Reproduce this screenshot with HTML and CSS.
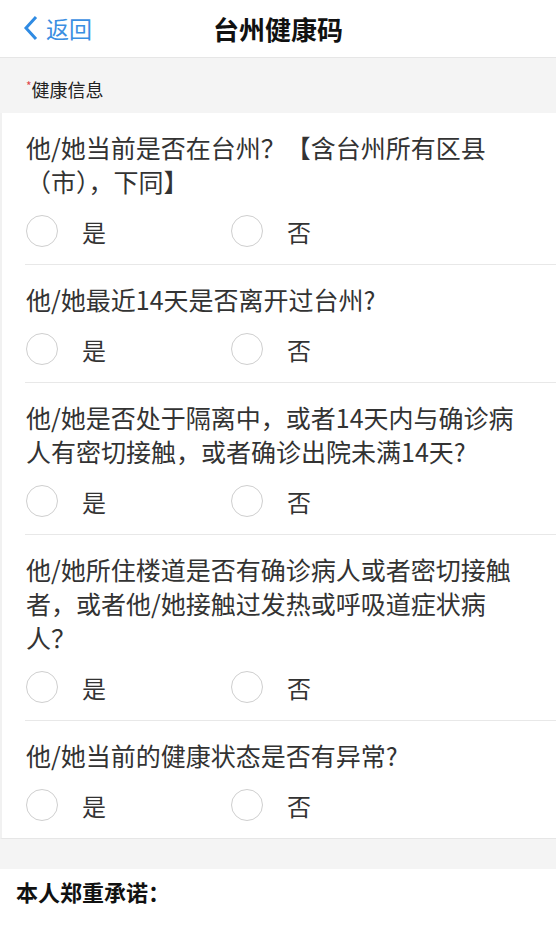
FILE: index.html
```html
<!DOCTYPE html>
<html>
<head>
  <meta charset="utf-8">
  <title>台州健康码</title>
  <link rel="stylesheet" href="styles.css">
</head>
<body>
  <div class="header">
    <a class="back">
      <svg width="16" height="26" viewBox="0 0 16 26"><polyline points="13,2 3,13 13,24" fill="none" stroke="#2f8be3" stroke-width="3" stroke-linejoin="miter"/></svg>
      <span>返回</span>
    </a>
    <h1>台州健康码</h1>
  </div>

  <div class="section-title"><span class="star">*</span>健康信息</div>

  <div class="form">
    <div class="question">
      <p>他/她当前是否在台州？【含台州所有区县（市），下同】</p>
      <div class="options">
        <label class="option"><span class="radio"></span>是</label>
        <label class="option"><span class="radio"></span>否</label>
      </div>
    </div>
    <div class="question">
      <p>他/她最近14天是否离开过台州?</p>
      <div class="options">
        <label class="option"><span class="radio"></span>是</label>
        <label class="option"><span class="radio"></span>否</label>
      </div>
    </div>
    <div class="question">
      <p>他/她是否处于隔离中，或者14天内与确诊病人有密切接触，或者确诊出院未满14天?</p>
      <div class="options">
        <label class="option"><span class="radio"></span>是</label>
        <label class="option"><span class="radio"></span>否</label>
      </div>
    </div>
    <div class="question">
      <p>他/她所住楼道是否有确诊病人或者密切接触者，或者他/她接触过发热或呼吸道症状病人？</p>
      <div class="options">
        <label class="option"><span class="radio"></span>是</label>
        <label class="option"><span class="radio"></span>否</label>
      </div>
    </div>
    <div class="question">
      <p>他/她当前的健康状态是否有异常?</p>
      <div class="options">
        <label class="option"><span class="radio"></span>是</label>
        <label class="option"><span class="radio"></span>否</label>
      </div>
    </div>
  </div>

  <div class="promise">本人郑重承诺：</div>
</body>
</html>
```

FILE: styles.css
```css
body {
  margin: 0;
  background: #f4f4f4;
  font-family: "Noto Sans CJK SC", "Noto Sans", sans-serif;
  color: #333;
}
.header {
  height: 57px;
  background: #fff;
  border-bottom: 1px solid #e6e6e6;
  display: flex;
  align-items: center;
  justify-content: center;
  position: relative;
}
.back {
  position: absolute;
  left: 23px;
  top: 0;
  height: 55px;
  display: flex;
  align-items: center;
  gap: 7px;
  color: #3a8fe2;
  font-size: 23px;
}
.header h1 {
  margin: 0;
  font-size: 26px;
  font-weight: bold;
  color: #111;
}
.section-title {
  height: 55px;
  line-height: 62px;
  padding-left: 26px;
  font-size: 18px;
  color: #222;
}
.star {
  color: #e0474c;
  font-size: 12px;
  vertical-align: top;
  line-height: 56px;
}
.form {
  background: #fff;
  border-left: 2px solid #f1f1f1;
  border-bottom: 1px solid #e6e6e6;
}
.question {
  margin-left: 23px;
  padding: 17px 30px 16px 1px;
  border-bottom: 1px solid #e8e8e8;
}
.question:last-child {
  border-bottom: none;
}
.question p {
  margin: 0 0 16px;
  font-size: 25px;
  line-height: 34px;
  color: #333;
}
.options {
  display: flex;
  height: 34px;
}
.option {
  width: 205px;
  display: flex;
  align-items: center;
  font-size: 24px;
  color: #333;
}
.radio {
  width: 30px;
  height: 30px;
  border: 1.5px solid #cfcfcf;
  border-radius: 50%;
  margin-right: 24px;
}
.promise {
  margin-top: 30px;
  background: #fff;
  padding: 6px 16px;
  height: 60px;
  font-size: 22px;
  font-weight: bold;
  color: #111;
}
```
